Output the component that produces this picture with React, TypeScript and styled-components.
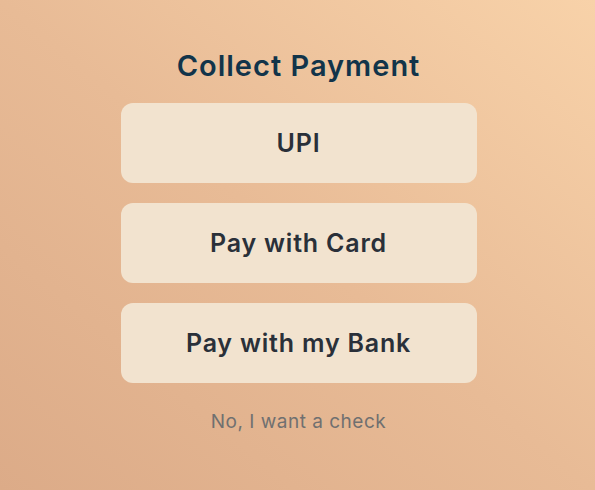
import React from 'react';
import styled, {createGlobalStyle} from 'styled-components';

const GlobalStyle = createGlobalStyle`
  html, body {
    margin: 0;
    padding: 0;
  }
  body {
    font-family: Inter, "Open Sans", sans-serif;
  }
`;

const Page = styled.div`
  width: 595px;
  height: 490px;
  box-sizing: border-box;
  background: linear-gradient(to top right, #dcab88 0%, #e8bb96 50%, #f8d2a9 100%);
  display: flex;
  flex-direction: column;
  align-items: center;
  padding-top: 47px;
  padding-left: 2px;
`;

const Title = styled.h1`
  margin: 0 0 18px;
  font-size: 29px;
  line-height: 38px;
  font-weight: 600;
  color: #12344a;
  letter-spacing: 1px;
`;

const Options = styled.div`
  display: flex;
  flex-direction: column;
  gap: 20px;
`;

const OptionButton = styled.button`
  width: 356px;
  height: 80px;
  border: none;
  border-radius: 12px;
  background: #f2e3cf;
  color: #2a3039;
  font-family: inherit;
  font-size: 25px;
  font-weight: 600;
  letter-spacing: 0.8px;
  cursor: pointer;
`;

const CheckLink = styled.a`
  margin-top: 27px;
  font-size: 19px;
  letter-spacing: 0.5px;
  color: #707070;
  text-decoration: none;
  cursor: pointer;
`;

const options = ['UPI', 'Pay with Card', 'Pay with my Bank'];

function App() {
  return (
    <>
      <GlobalStyle />
      <Page>
        <Title>Collect Payment</Title>
        <Options>
          {options.map(label => (
            <OptionButton key={label}>{label}</OptionButton>
          ))}
        </Options>
        <CheckLink>No, I want a check</CheckLink>
      </Page>
    </>
  );
}

export default App;
